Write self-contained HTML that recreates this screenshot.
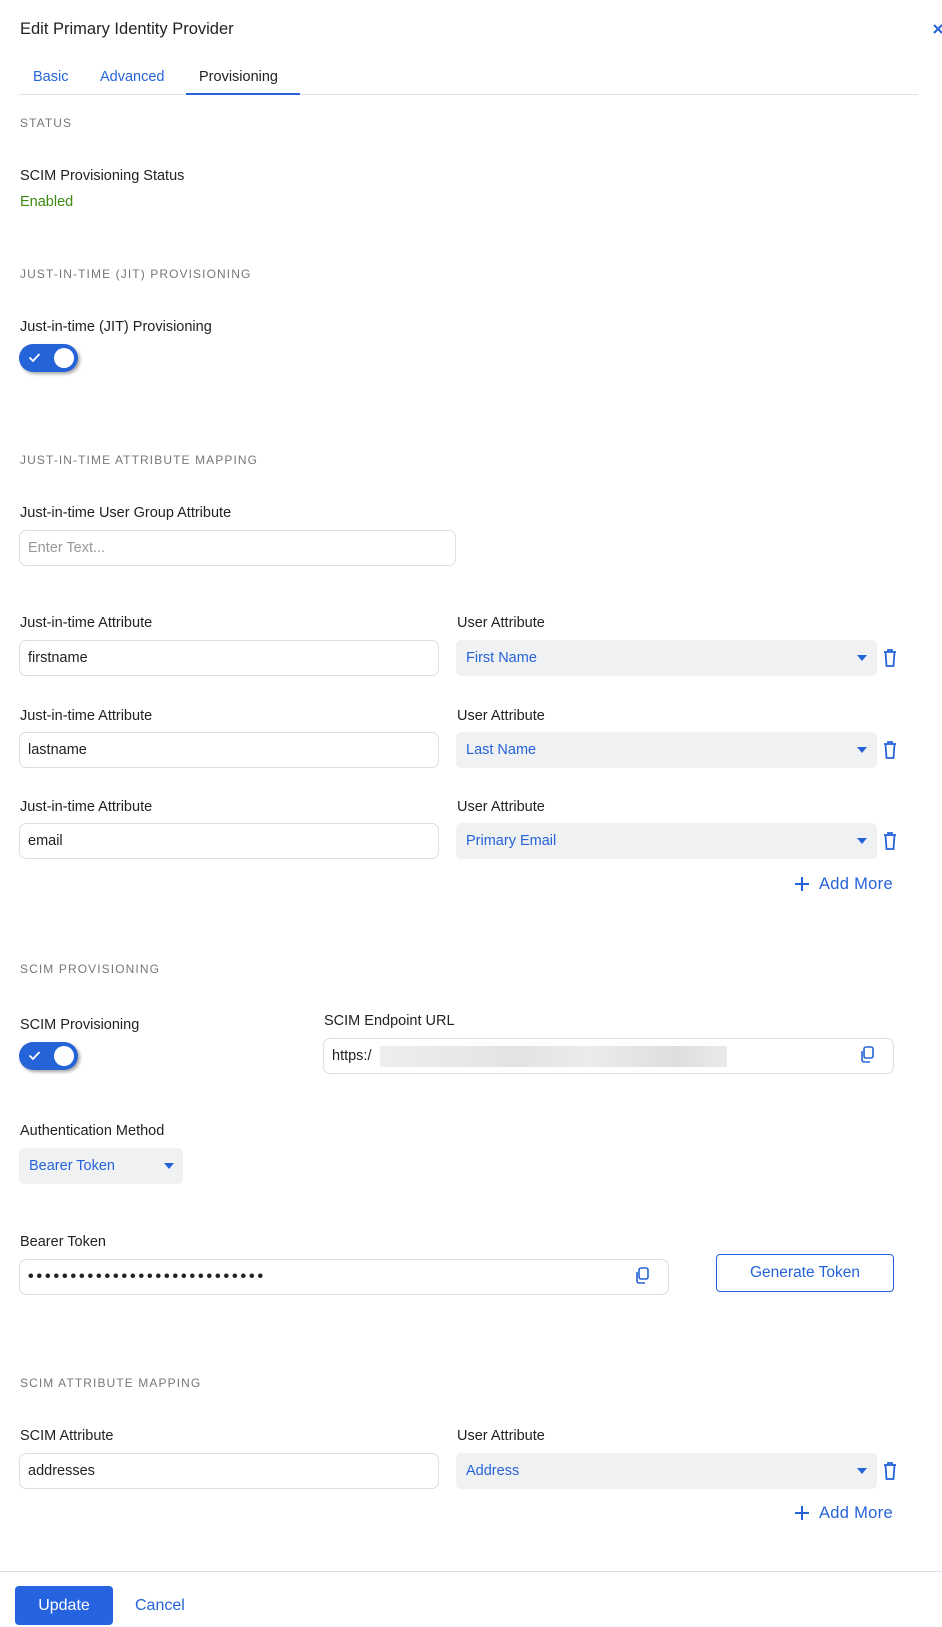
<!DOCTYPE html>
<html><head><meta charset="utf-8"><style>
*{box-sizing:border-box;margin:0;padding:0}
body{width:942px;height:1627px;background:#fff;font-family:"Liberation Sans",sans-serif;color:#222;font-size:14.5px;position:relative;overflow:hidden}
.a{position:absolute;white-space:nowrap;line-height:18px}
.h{font-size:12px;letter-spacing:1.1px;color:#777}
.blue{color:#2563d9}
.inp{position:absolute;height:36px;border:1px solid #dcdfe4;border-radius:7px;background:#fff;padding-left:8px;line-height:34px;color:#222}
.sel{position:absolute;height:36px;border-radius:5px;background:#f0f1f3;color:#2563d9;padding-left:10px;line-height:36px}
.caret{position:absolute;right:10px;top:15px;width:0;height:0;border-left:5px solid transparent;border-right:5px solid transparent;border-top:6px solid #2563d9}
.tog{position:absolute;width:59px;height:28px;border-radius:14px;background:#2563d9;box-shadow:2px 2px 3px rgba(0,0,0,.35)}
.tog:after{content:"";position:absolute;right:4px;top:4px;width:20px;height:20px;border-radius:50%;background:#fff}
.tog svg{position:absolute;left:9px;top:8px}
.copy{position:absolute}
.add{position:absolute;color:#2563d9;font-size:16.5px;letter-spacing:.3px;line-height:20px;white-space:nowrap}
.add svg{position:absolute;left:0;top:3px}
.add span{position:absolute;left:24px;top:0}
</style></head><body>
<div class="a" style="left:20px;top:20px;font-size:16.5px;color:#222">Edit Primary Identity Provider</div>
<svg style="position:absolute;left:933px;top:24px" width="10" height="10" viewBox="0 0 10 10"><path d="M1 1l8 8M9 1l-8 8" stroke="#2563d9" stroke-width="2"/></svg>
<div class="a blue" style="left:33px;top:68px">Basic</div>
<div class="a blue" style="left:100px;top:68px">Advanced</div>
<div class="a" style="left:199px;top:68px">Provisioning</div>
<div style="position:absolute;left:19px;top:94px;width:899px;height:1px;background:#e2e4e8"></div>
<div style="position:absolute;left:186px;top:93px;width:114px;height:2px;background:#2563d9"></div>

<div class="a h" style="left:20px;top:114px">STATUS</div>
<div class="a" style="left:20px;top:167px">SCIM Provisioning Status</div>
<div class="a" style="left:20px;top:193px;color:#3d8a12">Enabled</div>

<div class="a h" style="left:20px;top:265px">JUST-IN-TIME (JIT) PROVISIONING</div>
<div class="a" style="left:20px;top:318px">Just-in-time (JIT) Provisioning</div>
<div class="tog" style="left:19px;top:344px"><svg width="13" height="11" viewBox="0 0 13 11"><path d="M1.5 5.5l3.5 3.5 6.5-7" stroke="#fff" stroke-width="1.8" fill="none"/></svg></div>

<div class="a h" style="left:20px;top:451px">JUST-IN-TIME ATTRIBUTE MAPPING</div>
<div class="a" style="left:20px;top:504px">Just-in-time User Group Attribute</div>
<div class="inp" style="left:19px;top:530px;width:437px;color:#999">Enter Text...</div>

<div class="a" style="left:20px;top:614px">Just-in-time Attribute</div>
<div class="a" style="left:457px;top:614px">User Attribute</div>
<div class="inp" style="left:19px;top:640px;width:420px">firstname</div>
<div class="sel" style="left:456px;top:640px;width:421px">First Name<span class="caret"></span></div>

<div class="a" style="left:20px;top:707px">Just-in-time Attribute</div>
<div class="a" style="left:457px;top:707px">User Attribute</div>
<div class="inp" style="left:19px;top:732px;width:420px">lastname</div>
<div class="sel" style="left:456px;top:732px;width:421px">Last Name<span class="caret"></span></div>

<div class="a" style="left:20px;top:798px">Just-in-time Attribute</div>
<div class="a" style="left:457px;top:798px">User Attribute</div>
<div class="inp" style="left:19px;top:823px;width:420px">email</div>
<div class="sel" style="left:456px;top:823px;width:421px">Primary Email<span class="caret"></span></div>

<svg style="position:absolute;left:882px;top:648px" width="16" height="20" viewBox="0 0 16 20"><path d="M2 4h12M6 4V2h4v2M3.5 4l1 14h7l1-14" stroke="#2563d9" stroke-width="1.8" fill="none"/></svg>
<svg style="position:absolute;left:882px;top:740px" width="16" height="20" viewBox="0 0 16 20"><path d="M2 4h12M6 4V2h4v2M3.5 4l1 14h7l1-14" stroke="#2563d9" stroke-width="1.8" fill="none"/></svg>
<svg style="position:absolute;left:882px;top:831px" width="16" height="20" viewBox="0 0 16 20"><path d="M2 4h12M6 4V2h4v2M3.5 4l1 14h7l1-14" stroke="#2563d9" stroke-width="1.8" fill="none"/></svg>

<div class="add" style="left:795px;top:874px"><svg width="14" height="14" viewBox="0 0 14 14"><path d="M7 0v14M0 7h14" stroke="#2563d9" stroke-width="2"/></svg><span>Add More</span></div>

<div class="a h" style="left:20px;top:960px">SCIM PROVISIONING</div>
<div class="a" style="left:20px;top:1016px">SCIM Provisioning</div>
<div class="tog" style="left:19px;top:1042px"><svg width="13" height="11" viewBox="0 0 13 11"><path d="M1.5 5.5l3.5 3.5 6.5-7" stroke="#fff" stroke-width="1.8" fill="none"/></svg></div>
<div class="a" style="left:324px;top:1012px">SCIM Endpoint URL</div>
<div class="inp" style="left:323px;top:1038px;width:571px">https:/</div>
<div style="position:absolute;left:380px;top:1046px;width:347px;height:21px;background:linear-gradient(90deg,#eee,#e3e3e3 40%,#ececec 60%,#dedede 85%,#eaeaea)"></div>
<svg class="copy" style="left:859px;top:1046px" width="16" height="18" viewBox="0 0 16 18"><rect x="5" y="1" width="9" height="11" rx="2" stroke="#2563d9" stroke-width="1.6" fill="none"/><path d="M3 5v9a2 2 0 0 0 2 2h6" stroke="#2563d9" stroke-width="1.6" fill="none"/></svg>

<div class="a" style="left:20px;top:1122px">Authentication Method</div>
<div class="sel" style="left:19px;top:1148px;width:164px">Bearer Token<span class="caret" style="right:9px"></span></div>

<div class="a" style="left:20px;top:1233px">Bearer Token</div>
<div class="inp" style="left:19px;top:1259px;width:650px;letter-spacing:2.9px;font-size:16px;font-weight:bold">••••••••••••••••••••••••••••</div>
<svg class="copy" style="left:634px;top:1267px" width="16" height="18" viewBox="0 0 16 18"><rect x="5" y="1" width="9" height="11" rx="2" stroke="#2563d9" stroke-width="1.6" fill="none"/><path d="M3 5v9a2 2 0 0 0 2 2h6" stroke="#2563d9" stroke-width="1.6" fill="none"/></svg>
<div style="position:absolute;left:716px;top:1254px;width:178px;height:38px;border:1px solid #2563d9;border-radius:4px;color:#2563d9;text-align:center;line-height:36px;font-size:15.5px">Generate Token</div>

<div class="a h" style="left:20px;top:1374px">SCIM ATTRIBUTE MAPPING</div>
<div class="a" style="left:20px;top:1427px">SCIM Attribute</div>
<div class="a" style="left:457px;top:1427px">User Attribute</div>
<div class="inp" style="left:19px;top:1453px;width:420px">addresses</div>
<div class="sel" style="left:456px;top:1453px;width:421px">Address<span class="caret"></span></div>
<svg style="position:absolute;left:882px;top:1461px" width="16" height="20" viewBox="0 0 16 20"><path d="M2 4h12M6 4V2h4v2M3.5 4l1 14h7l1-14" stroke="#2563d9" stroke-width="1.8" fill="none"/></svg>
<div class="add" style="left:795px;top:1503px"><svg width="14" height="14" viewBox="0 0 14 14"><path d="M7 0v14M0 7h14" stroke="#2563d9" stroke-width="2"/></svg><span>Add More</span></div>

<div style="position:absolute;left:0;top:1571px;width:942px;height:1px;background:#dcdde3"></div>
<div style="position:absolute;left:15px;top:1586px;width:98px;height:39px;border-radius:4px;background:#2563e0;color:#fff;text-align:center;line-height:39px;font-size:16px">Update</div>
<div class="a blue" style="left:135px;top:1597px;font-size:16px">Cancel</div>
</body></html>
